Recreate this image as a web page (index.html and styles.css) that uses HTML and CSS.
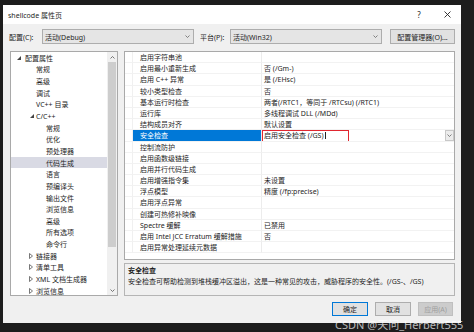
FILE: index.html
```html
<!DOCTYPE html>
<html lang="zh-CN">

<head>
  <meta charset="UTF-8" />
  <title>shellcode 属性页</title>
  <link rel="stylesheet" href="styles.css">
</head>

<body>
  <div class="screen">
    <div class="dialog">
      <div class="titlebar">
        <span class="title">shellcode 属性页</span>
        <span class="help">?</span>
        <span class="close"><svg width="7" height="7" viewBox="0 0 7 7"><path d="M0.5 0.5L6.5 6.5M6.5 0.5L0.5 6.5" stroke="#222" stroke-width="0.9" /></svg></span>
      </div>

      <div class="toolbar">
        <span class="lbl lbl-config">配置(C):</span>
        <div class="combo">活动(Debug)<svg class="chev" width="5" height="3" viewBox="0 0 5 3"><path d="M0.5 0.5L2.5 2.5L4.5 0.5" fill="none" stroke="#666" stroke-width="0.8" /></svg></div>
        <span class="lbl lbl-platform">平台(P):</span>
        <div class="combo">活动(Win32)<svg class="chev" width="5" height="3" viewBox="0 0 5 3"><path d="M0.5 0.5L2.5 2.5L4.5 0.5" fill="none" stroke="#666" stroke-width="0.8" /></svg></div>
        <button class="btn btn-manager">配置管理器(O)...</button>
      </div>

      <div class="main">
        <div class="tree">
          <ul class="tree-list">
            <li class="l0"><span class="arrow a0"><svg width="4" height="4" viewBox="0 0 4 4"><path d="M4 0L4 4L0 4Z" fill="#444" /></svg></span>配置属性</li>
            <li class="l1">常规</li>
            <li class="l1">高级</li>
            <li class="l1">调试</li>
            <li class="l1">VC++ 目录</li>
            <li class="l1a"><span class="arrow a1"><svg width="4" height="4" viewBox="0 0 4 4"><path d="M4 0L4 4L0 4Z" fill="#444" /></svg></span>C/C++</li>
            <li class="l2">常规</li>
            <li class="l2">优化</li>
            <li class="l2">预处理器</li>
            <li class="l2 current">代码生成</li>
            <li class="l2">语言</li>
            <li class="l2">预编译头</li>
            <li class="l2">输出文件</li>
            <li class="l2">浏览信息</li>
            <li class="l2">高级</li>
            <li class="l2">所有选项</li>
            <li class="l2">命令行</li>
            <li class="l1c"><span class="arrow a2"><svg width="4" height="6" viewBox="0 0 4 6"><path d="M0.5 0.5L3.5 3L0.5 5.5Z" fill="none" stroke="#555" stroke-width="0.8" /></svg></span>链接器</li>
            <li class="l1c"><span class="arrow a2"><svg width="4" height="6" viewBox="0 0 4 6"><path d="M0.5 0.5L3.5 3L0.5 5.5Z" fill="none" stroke="#555" stroke-width="0.8" /></svg></span>清单工具</li>
            <li class="l1c"><span class="arrow a2"><svg width="4" height="6" viewBox="0 0 4 6"><path d="M0.5 0.5L3.5 3L0.5 5.5Z" fill="none" stroke="#555" stroke-width="0.8" /></svg></span>XML 文档生成器</li>
            <li class="l1c"><span class="arrow a2"><svg width="4" height="6" viewBox="0 0 4 6"><path d="M0.5 0.5L3.5 3L0.5 5.5Z" fill="none" stroke="#555" stroke-width="0.8" /></svg></span>浏览信息</li>
          </ul>
          <div class="vscroll">
            <div class="sb-btn"><svg width="5" height="3" viewBox="0 0 5 3"><path d="M0.5 2.5L2.5 0.5L4.5 2.5" fill="none" stroke="#555" stroke-width="0.8" /></svg></div>
            <div class="thumb"></div>
            <div class="track"></div>
            <div class="sb-btn"><svg width="5" height="3" viewBox="0 0 5 3"><path d="M0.5 0.5L2.5 2.5L4.5 0.5" fill="none" stroke="#555" stroke-width="0.8" /></svg></div>
          </div>
        </div>

        <div class="right">
          <div class="grid">
            <div class="row"><span class="gutter"></span><span class="name">启用字符串池</span><span class="value"></span></div>
            <div class="row"><span class="gutter"></span><span class="name">启用最小重新生成</span><span class="value">否 (/Gm-)</span></div>
            <div class="row"><span class="gutter"></span><span class="name">启用 C++ 异常</span><span class="value">是 (/EHsc)</span></div>
            <div class="row"><span class="gutter"></span><span class="name">较小类型检查</span><span class="value">否</span></div>
            <div class="row"><span class="gutter"></span><span class="name">基本运行时检查</span><span class="value">两者(/RTC1，等同于 /RTCsu) (/RTC1)</span></div>
            <div class="row"><span class="gutter"></span><span class="name">运行库</span><span class="value">多线程调试 DLL (/MDd)</span></div>
            <div class="row"><span class="gutter"></span><span class="name">结构成员对齐</span><span class="value">默认设置</span></div>
            <div class="row sel"><span class="gutter"></span><span class="name">安全检查</span><span class="value"><span class="mark">启用安全检查 (/GS)<i class="caret"></i></span><span class="dd"><svg width="5" height="3" viewBox="0 0 5 3"><path d="M0.5 0.5L2.5 2.5L4.5 0.5" fill="none" stroke="#666" stroke-width="0.8" /></svg></span></span></div>
            <div class="row"><span class="gutter"></span><span class="name">控制流防护</span><span class="value"></span></div>
            <div class="row"><span class="gutter"></span><span class="name">启用函数级链接</span><span class="value"></span></div>
            <div class="row"><span class="gutter"></span><span class="name">启用并行代码生成</span><span class="value"></span></div>
            <div class="row"><span class="gutter"></span><span class="name">启用增强指令集</span><span class="value">未设置</span></div>
            <div class="row"><span class="gutter"></span><span class="name">浮点模型</span><span class="value">精度 (/fp:precise)</span></div>
            <div class="row"><span class="gutter"></span><span class="name">启用浮点异常</span><span class="value"></span></div>
            <div class="row"><span class="gutter"></span><span class="name">创建可热修补映像</span><span class="value"></span></div>
            <div class="row"><span class="gutter"></span><span class="name">Spectre 缓解</span><span class="value">已禁用</span></div>
            <div class="row"><span class="gutter"></span><span class="name">启用 Intel JCC Erratum 缓解措施</span><span class="value">否</span></div>
            <div class="row"><span class="gutter"></span><span class="name">启用异常处理延续元数据</span><span class="value"></span></div>
          </div>
          <div class="desc">
            <div class="desc-title">安全检查</div>
            <div>安全检查可帮助检测到堆栈缓冲区溢出，这是一种常见的攻击，威胁程序的安全性。(/GS-、/GS)</div>
          </div>
        </div>
      </div>

      <div class="buttons">
        <button class="btn btn-ok">确定</button>
        <button class="btn">取消</button>
        <button class="btn btn-apply" disabled>应用(A)</button>
      </div>
    </div>

    <div class="watermark">CSDN @天问_Herbert555</div>
  </div>
</body>

</html>
```

FILE: styles.css
```css
* {
  box-sizing: border-box;
}

body {
  margin: 0;
  background-color: #1d1d1d;
  font-family: "Noto Sans", "Noto Sans CJK SC", sans-serif;
  font-size: 7px;
  color: #1e1e1e;
}

.screen {
  position: relative;
  width: 474px;
  height: 332px;
  overflow: hidden;
  padding: 5px 0 0 3px;
}

.dialog {
  width: 458px;
  height: 318px;
  background-color: #f0f0f0;
  display: flex;
  flex-direction: column;
}

.titlebar {
  height: 19px;
  background-color: #fff;
  display: flex;
  align-items: center;
  padding-left: 5px;
}

.title {
  flex: 1;
}

.help,
.close {
  width: 28px;
  display: flex;
  justify-content: center;
  align-items: center;
}

.help {
  font-size: 8px;
}

.toolbar {
  display: flex;
  align-items: center;
  height: 15px;
  margin-top: 5px;
  padding-left: 6px;
}

.lbl-config {
  width: 33px;
}

.lbl-platform {
  width: 30px;
  margin-left: 6px;
}

.combo {
  width: 152px;
  height: 15px;
  background-color: #e5e5e5;
  border: 1px solid #adadad;
  display: flex;
  align-items: center;
  justify-content: space-between;
  padding: 0 3px 0 2px;
}

.btn {
  height: 14px;
  padding: 0;
  border: 1px solid #adadad;
  background-color: #e1e1e1;
  font-family: inherit;
  font-size: 7px;
  color: #1e1e1e;
}

.btn-manager {
  width: 65px;
  height: 15px;
  margin-left: 8px;
}

.main {
  display: flex;
  gap: 6px;
  height: 245px;
  margin-top: 7px;
  padding-left: 7px;
}

.tree {
  width: 108px;
  height: 245px;
  border: 1px solid #a9a9a9;
  background-color: #fff;
  display: flex;
}

.tree-list {
  flex: 1;
  list-style: none;
  margin: 0;
  padding: 0;
  overflow: hidden;
}

.tree-list li {
  height: 11.65px;
  display: flex;
  align-items: center;
  white-space: nowrap;
}

.tree-list .current {
  background-color: #d9dae4;
}

.arrow {
  display: inline-flex;
  align-items: center;
}

.l0 {
  padding-left: 6px;
}

.a0 {
  width: 8px;
}

.l1 {
  padding-left: 25px;
}

.l1a {
  padding-left: 19px;
}

.a1 {
  width: 6px;
}

.l1c {
  padding-left: 18px;
}

.a2 {
  width: 7px;
}

.l2 {
  padding-left: 35px;
}

.vscroll {
  width: 10px;
  display: flex;
  flex-direction: column;
  background-color: #f0f0f0;
}

.sb-btn {
  height: 10px;
  display: flex;
  justify-content: center;
  align-items: center;
}

.thumb {
  height: 185px;
  margin: 0 1px;
  background-color: #cdcdcd;
}

.track {
  flex: 1;
}

.right {
  width: 331px;
  display: flex;
  flex-direction: column;
  gap: 3px;
}

.grid {
  height: 209px;
  border: 1px solid #a9a9a9;
  background-color: #fff;
  overflow: hidden;
}

.row {
  display: grid;
  grid-template-columns: 8px 129px 1fr;
  height: 11.2px;
  line-height: 11.2px;
}

.row > span {
  border-bottom: 1px solid #f2f2f2;
  white-space: nowrap;
  overflow: hidden;
}

.gutter {
  border-right: 1px solid #f0f0f0;
}

.name {
  padding-left: 7px;
  border-right: 1px solid #ececec;
}

.value {
  padding-left: 2px;
}

.row.sel .name {
  background-color: #0078d7;
  color: #fff;
}

.row.sel .value {
  display: flex;
  padding-left: 0;
}

.mark {
  width: 87px;
  height: 11.2px;
  padding-left: 1px;
  border: 1.5px solid #e0262f;
  line-height: 8.5px;
  display: flex;
  align-items: center;
}

.caret {
  width: 1px;
  height: 7px;
  margin-left: 1px;
  background-color: #222;
}

.dd {
  margin-left: auto;
  width: 9px;
  height: 11px;
  border: 1px solid #c8c8c8;
  background-color: #ececec;
  display: flex;
  justify-content: center;
  align-items: center;
}

.desc {
  height: 33px;
  border: 1px solid #b5b5b5;
  padding: 1px 3px;
  line-height: 11px;
  white-space: nowrap;
}

.desc-title {
  font-weight: bold;
}

.buttons {
  display: flex;
  justify-content: flex-end;
  gap: 7px;
  margin-top: 6px;
  padding-right: 8px;
}

.buttons .btn {
  width: 36px;
}

.buttons .btn-apply {
  width: 35px;
  color: #9e9e9e;
  background-color: #cccccc;
  border-color: #bfbfbf;
}

.btn-ok {
  border-color: #0078d7;
}

.watermark {
  position: absolute;
  left: 335px;
  top: 318px;
  font-size: 11px;
  line-height: 13px;
  color: rgba(255, 255, 255, 0.7);
  white-space: nowrap;
}
```
